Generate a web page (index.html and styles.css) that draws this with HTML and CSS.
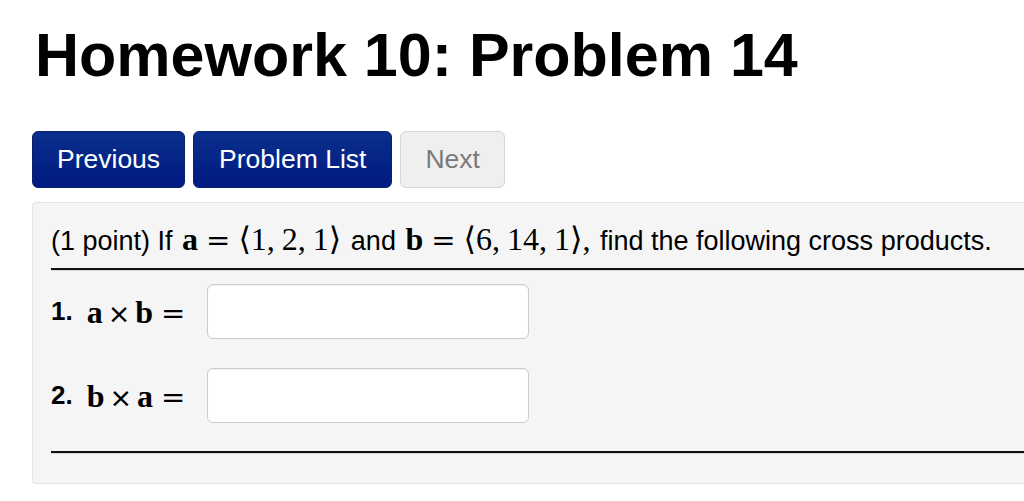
FILE: index.html
```html
<!DOCTYPE html>
<html lang="en">
<head>
  <meta charset="UTF-8">
  <title>Homework 10: Problem 14</title>
  <link rel="stylesheet" href="styles.css">
</head>
<body>

<div class="page">
  <h1>Homework 10: Problem 14</h1>

  <div class="nav">
    <a class="btn btn-primary" href="#">Previous</a>
    <a class="btn btn-primary" href="#">Problem List</a>
    <span class="btn btn-disabled">Next</span>
  </div>

  <div class="problem">
    <p class="statement">(1 point) If <span class="math"><b>a</b><span class="rel">=</span>⟨1,<span class="sp"></span>2,<span class="sp"></span>1⟩</span> and <span class="math"><b>b</b><span class="rel">=</span>⟨6,<span class="sp"></span>14,<span class="sp"></span>1⟩,</span> find the following cross products.</p>
    <hr>

    <div class="answer">
      <span class="num">1.</span>
      <span class="math"><b>a</b><span class="op">×</span><b>b</b><span class="rel">=</span></span>
      <input type="text" class="answer-input">
    </div>
    <div class="answer">
      <span class="num">2.</span>
      <span class="math"><b>b</b><span class="op">×</span><b>a</b><span class="rel">=</span></span>
      <input type="text" class="answer-input">
    </div>

    <hr>
  </div>
</div>

</body>
</html>
```

FILE: styles.css
```css
html, body {
  overflow: hidden;
}

body {
  margin: 0;
  font-family: "Liberation Sans", Arial, Helvetica, sans-serif;
  background: #fff;
  color: #000;
}

.page {
  padding-left: 32px;
}

h1 {
  margin: 22px 0 0 3px;
  font-size: 61px;
  line-height: 67px;
  font-weight: bold;
}

.nav {
  display: flex;
  gap: 8px;
  margin-top: 42px;
}

.btn {
  display: block;
  padding: 12px 24px;
  font-size: 26.5px;
  line-height: 31px;
  border-radius: 6px;
  border: 1px solid;
  text-decoration: none;
}

.btn-primary {
  color: #fff;
  background: linear-gradient(to bottom, #0a2f8c 0%, #001a82 100%);
  border-color: #0b1f6e;
}

.btn-primary + .btn-primary {
  padding: 12px 25px;
}

.btn-disabled {
  color: #7a7a7a;
  background: #efefef;
  border-color: #d6d6d6;
}

.problem {
  margin-top: 14px;
  width: 1100px;
  background: #f5f5f5;
  border: 1px solid #e3e3e3;
  border-radius: 4px;
  padding: 18px 0 29px 18px;
}

.statement {
  margin: 0;
  font-size: 27px;
  line-height: 40px;
  white-space: nowrap;
}

.statement .math {
  margin: 0 2px;
}

.math {
  font-family: "Liberation Serif", "DejaVu Serif", "Times New Roman", serif;
  font-size: 32px;
  line-height: 1;
}

.math b {
  font-weight: bold;
}

.rel {
  font-family: "DejaVu Sans", sans-serif;
  font-size: 29px;
  margin: 0 8px;
}

.op {
  font-family: "DejaVu Sans", sans-serif;
  font-size: 27px;
  margin: 0 5px;
}

.sp {
  display: inline-block;
  width: 7px;
}

hr {
  height: 0;
  margin: 7px 0 0 0;
  border: 0;
  border-top: 2px solid #111;
  border-bottom: 1px solid #d8d8d8;
}

.answer {
  display: flex;
  align-items: center;
  margin-top: 13px;
}

.answer + .answer {
  margin-top: 29px;
}

.answer + hr {
  margin-top: 28px;
}

.num {
  font-size: 26px;
  font-weight: bold;
  margin-right: 14px;
}

.answer .math .rel {
  margin-right: 0;
}

.answer-input {
  margin-left: 22px;
  width: 322px;
  height: 55px;
  box-sizing: border-box;
  border: 1px solid #cccccc;
  border-radius: 6px;
  background: #fff;
  box-shadow: inset 0 1px 1px rgba(0,0,0,0.06);
  font-size: 20px;
  padding: 4px 10px;
}
```
